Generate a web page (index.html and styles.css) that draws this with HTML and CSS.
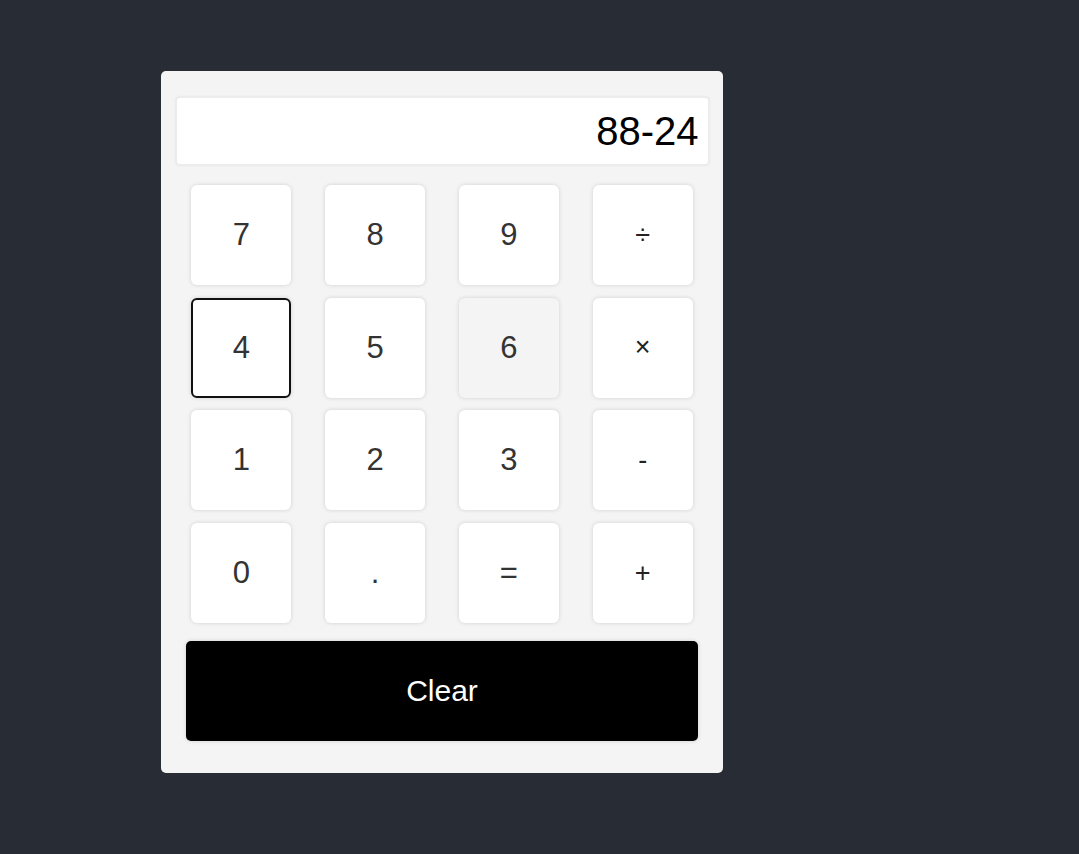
FILE: index.html
```html
<!DOCTYPE html>
<html lang="en">
<head>
  <meta charset="UTF-8">
  <title>Calculator</title>
  <link rel="stylesheet" href="styles.css">
</head>
<body>
  <div id="calculator">
    <div id="display">88-24</div>
    <div id="keys">
      <button class="key">7</button>
      <button class="key">8</button>
      <button class="key">9</button>
      <button class="key op">÷</button>
      <button class="key focused">4</button>
      <button class="key">5</button>
      <button class="key hovered">6</button>
      <button class="key op">×</button>
      <button class="key">1</button>
      <button class="key">2</button>
      <button class="key">3</button>
      <button class="key op">-</button>
      <button class="key">0</button>
      <button class="key">.</button>
      <button class="key">=</button>
      <button class="key op">+</button>
    </div>
    <button id="clearBtn">Clear</button>
  </div>
</body>
</html>
```

FILE: styles.css
```css
html, body {
  margin: 0;
  padding: 0;
  height: 100%;
  background-color: #282c34;
  font-family: "Liberation Sans", Arial, sans-serif;
}

body {
  padding: 71px 0 0 161px;
  box-sizing: border-box;
}

#calculator {
  width: 562px;
  box-sizing: border-box;
  padding: 25px 13.5px 32px 13.5px;
  background: #f4f4f4;
  border-radius: 5px;
}

#display {
  height: 70px;
  line-height: 66px;
  padding: 0 9px;
  background: #fff;
  border-radius: 5px;
  border: 2px solid #ececec;
  box-sizing: border-box;
  box-shadow: 0 0 2px rgba(0, 0, 0, 0.06);
  text-align: right;
  font-size: 40px;
  color: #000;
}

#keys {
  display: grid;
  grid-template-columns: repeat(4, 1fr);
  justify-items: center;
  row-gap: 12.7px;
  margin-top: 19px;
}

.key {
  width: 100px;
  height: 100px;
  border: none;
  border-radius: 6px;
  background: #fff;
  box-shadow: 0 0 4px rgba(0, 0, 0, 0.15);
  font-family: "Liberation Sans", Arial, sans-serif;
  font-size: 31px;
  color: #333;
  padding: 0;
  cursor: pointer;
}

.key.op {
  font-size: 27px;
  color: #222;
}

.key.hovered {
  background: #f4f4f4;
}

.key.focused {
  border: 2px solid #111;
}

#clearBtn {
  display: block;
  width: 512px;
  height: 100px;
  margin: 18px auto 0;
  border: none;
  border-radius: 5px;
  background: #000;
  color: #fff;
  font-family: "Liberation Sans", Arial, sans-serif;
  font-size: 30px;
  box-shadow: 0 0 4px rgba(0, 0, 0, 0.15);
  cursor: pointer;
}
```
